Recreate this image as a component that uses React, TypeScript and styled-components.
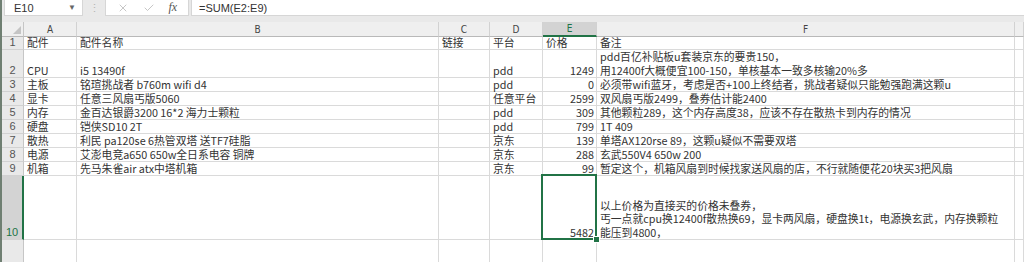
import React from 'react'
import styled, { createGlobalStyle, css } from 'styled-components'
import { X, Check } from 'lucide-react'

const GlobalStyle = createGlobalStyle`
  html, body {
    margin: 0;
    padding: 0;
    background: #ffffff;
    overflow: hidden;
  }
  * { box-sizing: border-box; }
`

const CELL_FONT = `"Noto Sans CJK SC", "Liberation Sans", sans-serif`
const GREEN = '#217346'
const GRID = '#dadada'

const Window = styled.div`
  width: 1024px;
  height: 262px;
  border-left: 2px solid #6f7f72;
  background: #e9e9e9;
  display: flex;
  flex-direction: column;
  overflow: hidden;
`

const FormulaBar = styled.div`
  display: flex;
  align-items: stretch;
  flex: none;
  height: 22px;
  padding-bottom: 6px;
`

const NameBox = styled.div`
  width: 79px;
  margin-left: 2px;
  background: #fff;
  border: 1px solid #d6d6d6;
  border-top: none;
  display: flex;
  align-items: center;
  justify-content: space-between;
  padding: 0 6px 0 9px;
  font-family: "Liberation Sans", sans-serif;
  font-size: 11px;
  color: #333;
`

const Caret = styled.span`
  font-size: 8px;
  color: #666;
`

const Grip = styled.div`
  width: 22px;
  display: flex;
  align-items: center;
  justify-content: center;
  color: #b5b5b5;
  font-size: 11px;
`

const FuncButtons = styled.div`
  width: 84px;
  background: #fff;
  border: 1px solid #d6d6d6;
  border-top: none;
  display: flex;
  align-items: center;
  justify-content: space-around;
  padding: 0 4px;
`

const Fx = styled.span`
  font-family: "Liberation Serif", serif;
  font-style: italic;
  font-size: 12px;
  color: #555;
`

const FormulaInput = styled.div`
  flex: 1;
  margin-left: 2px;
  background: #fff;
  border: 1px solid #d6d6d6;
  border-top: none;
  border-right: none;
  display: flex;
  align-items: center;
  padding-left: 7px;
  font-family: "Liberation Sans", sans-serif;
  font-size: 11px;
  color: #333;
`

const Sheet = styled.div`
  flex: none;
  display: grid;
  grid-template-columns: 22px 53px 362px 51px 53px 54px 418px 1fr;
  grid-template-rows: 15px 13px 28px repeat(7, 14px) 64px 64px;
  background: #fff;
  font-family: ${CELL_FONT};
`

const Corner = styled.div`
  background: #efefef;
  border-right: 1px solid #c6c6c6;
  border-bottom: 1px solid #b9b9b9;
  position: relative;
  &::after {
    content: '';
    position: absolute;
    right: 2px;
    bottom: 2px;
    border-style: solid;
    border-width: 0 0 8px 8px;
    border-color: transparent transparent #c4c4c4 transparent;
  }
`

const ColHead = styled.div<{ $active?: boolean }>`
  background: #efefef;
  border-right: 1px solid #d2d2d2;
  border-bottom: 1px solid #b9b9b9;
  display: flex;
  align-items: center;
  justify-content: center;
  font-family: "DejaVu Sans Condensed", "Liberation Sans", sans-serif;
  font-size: 10px;
  color: #444;
  ${p => p.$active && css`
    background: #d3d3d3;
    color: ${GREEN};
    border-bottom: 2px solid ${GREEN};
  `}
`

const RowHead = styled.div<{ $active?: boolean }>`
  background: #e9e9e9;
  border-right: 1px solid #c6c6c6;
  border-bottom: 1px solid #d2d2d2;
  display: flex;
  align-items: flex-end;
  justify-content: center;
  font-family: "Liberation Sans", sans-serif;
  font-size: 11px;
  line-height: 13px;
  color: #555;
  ${p => p.$active && css`
    background: #d3d3d3;
    color: ${GREEN};
    border-right: 2px solid ${GREEN};
  `}
`

const Cell = styled.div<{ $num?: boolean; $selected?: boolean }>`
  position: relative;
  border-right: 1px solid ${GRID};
  border-bottom: 1px solid ${GRID};
  display: flex;
  align-items: flex-end;
  justify-content: ${p => (p.$num ? 'flex-end' : 'flex-start')};
  padding: 0 2px 0 3px;
  font-size: 10.8px;
  line-height: 13.5px;
  color: #333;
  white-space: pre;
  ${p => p.$selected && css`
    &::after {
      content: '';
      position: absolute;
      left: -2px;
      top: -2px;
      right: -1px;
      bottom: -1px;
      border: 2px solid ${GREEN};
      pointer-events: none;
    }
    &::before {
      content: '';
      position: absolute;
      right: -4px;
      bottom: -4px;
      width: 5px;
      height: 5px;
      background: ${GREEN};
      border: 1px solid #fff;
      z-index: 2;
    }
  `}
`

const columns = ['A', 'B', 'C', 'D', 'E', 'F', '']

const rows: string[][] = [
  ['配件', '配件名称', '链接', '平台', '价格', '备注'],
  ['CPU', 'i5 13490f', '', 'pdd', '1249', 'pdd百亿补贴板u套装京东的要贵150，\n用12400f大概便宜100-150，单核基本一致多核输20%多'],
  ['主板', '铭瑄挑战者 b760m wifi d4', '', 'pdd', '0', '必须带wifi蓝牙，考虑是否+100上终结者，挑战者疑似只能勉强跑满这颗u'],
  ['显卡', '任意三风扇丐版5060', '', '任意平台', '2599', '双风扇丐版2499，叠券估计能2400'],
  ['内存', '金百达银爵3200 16*2 海力士颗粒', '', 'pdd', '309', '其他颗粒289，这个内存高度38，应该不存在散热卡到内存的情况'],
  ['硬盘', '铠侠SD10 2T', '', 'pdd', '799', '1T 409'],
  ['散热', '利民 pa120se 6热管双塔 送TF7硅脂', '', '京东', '139', '单塔AX120rse 89，这颗u疑似不需要双塔'],
  ['电源', '艾澎电竞a650 650w全日系电容 铜牌', '', '京东', '288', '玄武550V4 650w 200'],
  ['机箱', '先马朱雀air atx中塔机箱', '', '京东', '99', '暂定这个，机箱风扇到时候找家送风扇的店，不行就随便花20块买3把风扇'],
  ['', '', '', '', '5482', '以上价格为直接买的价格未叠券，\n丐一点就cpu换12400f散热换69，显卡两风扇，硬盘换1t，电源换玄武，内存换颗粒\n能压到4800，'],
  ['', '', '', '', '', ''],
]

// the last row runs past the bottom of the window, its number is out of view
const visibleRows = 10

const App = () => {
  return (
    <React.Fragment>
      <GlobalStyle />
      <Window>
        <FormulaBar>
          <NameBox>
            E10
            <Caret>▼</Caret>
          </NameBox>
          <Grip>⋮</Grip>
          <FuncButtons>
            <X size={12} color="#b3b3b3" strokeWidth={1.5} />
            <Check size={12} color="#b3b3b3" strokeWidth={1.5} />
            <Fx>fx</Fx>
          </FuncButtons>
          <FormulaInput>=SUM(E2:E9)</FormulaInput>
        </FormulaBar>
        <Sheet>
          <Corner />
          {columns.map((c, i) => (
            <ColHead key={i} $active={c === 'E'}>{c}</ColHead>
          ))}
          {rows.map((row, r) => (
            <React.Fragment key={r}>
              <RowHead $active={r === 9}>{r < visibleRows ? r + 1 : ''}</RowHead>
              {row.map((value, c) => (
                <Cell
                  key={c}
                  $num={c === 4 && r > 0}
                  $selected={r === 9 && c === 4}
                >
                  {value}
                </Cell>
              ))}
              <Cell />
            </React.Fragment>
          ))}
        </Sheet>
      </Window>
    </React.Fragment>
  )
}

export default App
